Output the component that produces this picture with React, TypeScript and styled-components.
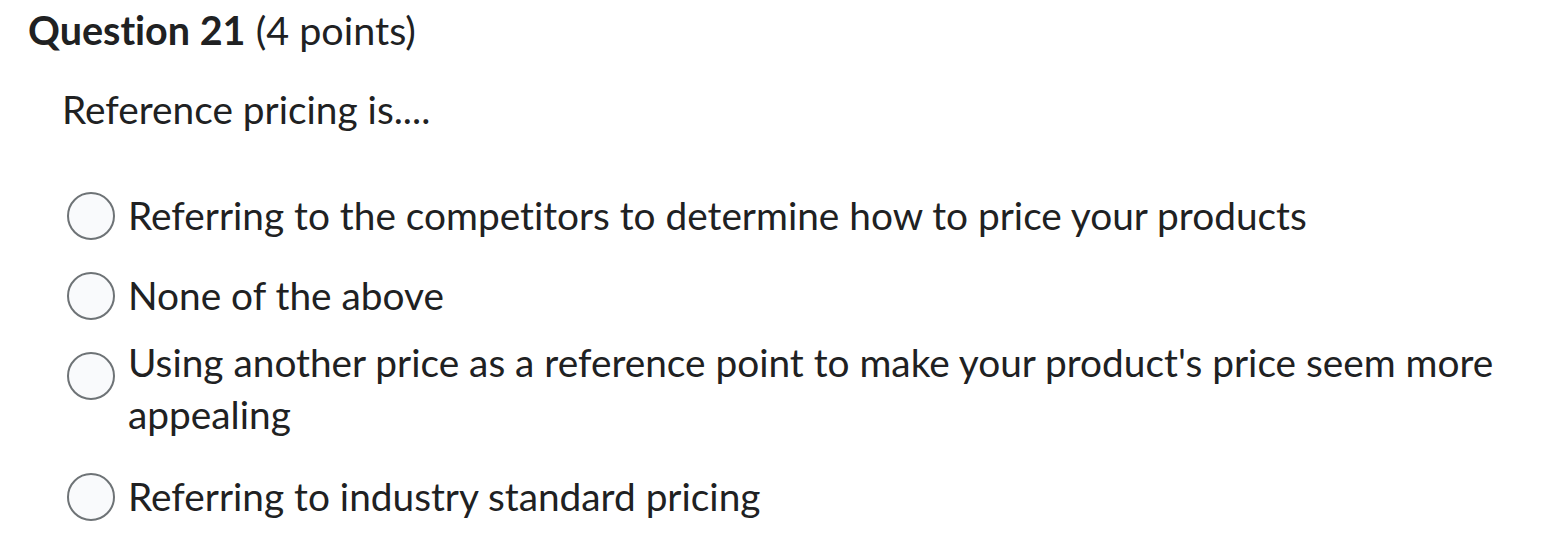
import React from "react";
import styled, { createGlobalStyle } from "styled-components";

const GlobalStyle = createGlobalStyle`
  body {
    margin: 0;
    background: #ffffff;
    font-family: Lato, "Noto Sans", sans-serif;
    font-variant-ligatures: none;
    color: #202122;
  }
`;

const Wrap = styled.div`
  padding: 6px 28px 0 28px;
`;

const Title = styled.h2`
  margin: 0;
  font-size: 39.5px;
  line-height: 48px;
  font-weight: 400;
  strong {
    font-weight: 700;
  }
`;

const Body = styled.div`
  padding-left: 34px;
  margin-top: 29px;
`;

const Prompt = styled.p`
  margin: 0 0 54px 0;
  font-size: 38.8px;
  line-height: 52px;
`;

const Options = styled.ul`
  list-style: none;
  margin: 0;
  padding: 0 0 0 5px;
  display: flex;
  flex-direction: column;
  gap: 28px;
`;

const Option = styled.li`
  display: flex;
  align-items: flex-start;
  gap: 13px;
`;

const Radio = styled.span`
  flex: none;
  box-sizing: border-box;
  width: 48px;
  height: 48px;
  margin-top: 3px;
  border-radius: 50%;
  border: 2px solid #6e7376;
  background: #f9fafc;
`;

const Label = styled.span<{ $wrapped?: boolean }>`
  font-size: 38.8px;
  line-height: 52px;
  margin-top: ${({ $wrapped }) => ($wrapped ? "-13px" : "0")};
  margin-bottom: ${({ $wrapped }) => ($wrapped ? "2px" : "0")};
`;

const choices = [
  { text: "Referring to the competitors to determine how to price your products" },
  { text: "None of the above" },
  {
    text: "Using another price as a reference point to make your product's price seem more appealing",
    wrapped: true,
  },
  { text: "Referring to industry standard pricing" },
];

const App = () => {
  return (
    <>
      <GlobalStyle />
      <Wrap>
        <Title>
          <strong>Question 21</strong> (4 points)
        </Title>
        <Body>
          <Prompt>Reference pricing is....</Prompt>
          <Options>
            {choices.map((c, i) => (
              <Option key={i}>
                <Radio />
                <Label $wrapped={c.wrapped}>{c.text}</Label>
              </Option>
            ))}
          </Options>
        </Body>
      </Wrap>
    </>
  );
};

export default App;
